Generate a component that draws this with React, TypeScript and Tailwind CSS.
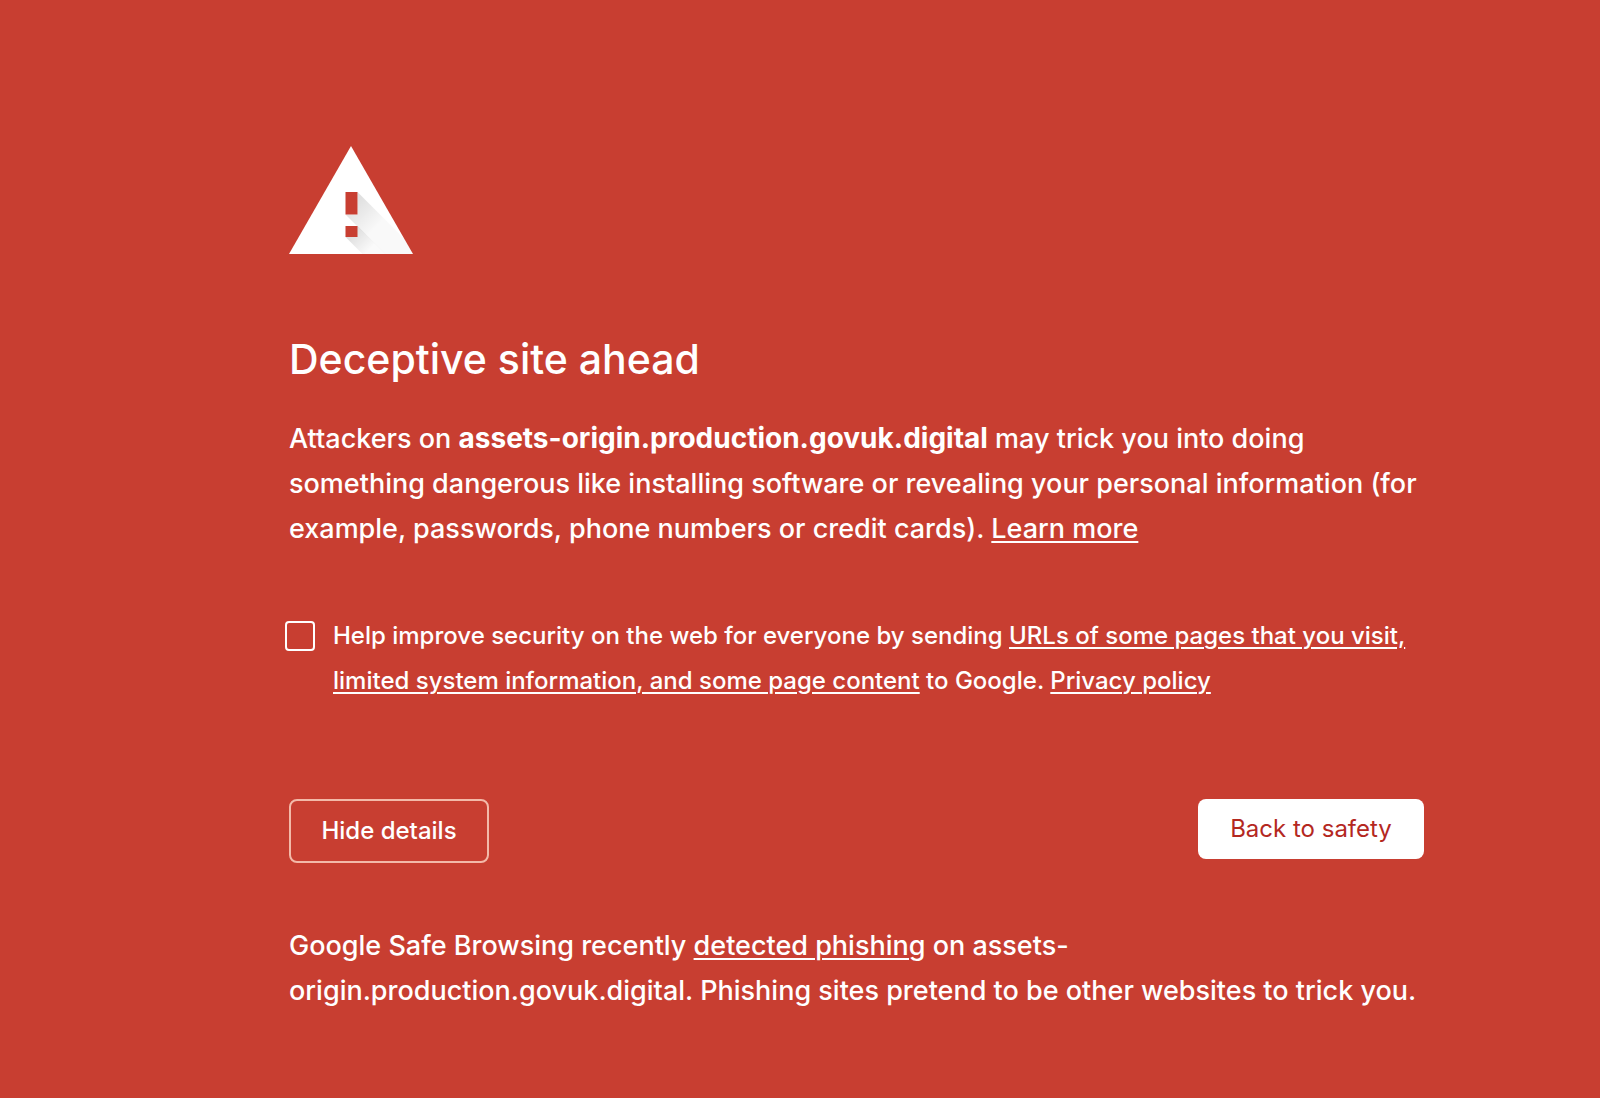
import { useState } from "react"

const linkStyle = "underline decoration-2 underline-offset-[3px]"

const WarningIcon = ()=>{
    return(
        <svg viewBox="0 0 124 108" className="w-[124px] h-[108px]" role="img" aria-label="Warning">
            <defs>
                <clipPath id="triangle">
                    <path d="M62 0 124 108H0z"/>
                </clipPath>
                <linearGradient id="shade" gradientUnits="userSpaceOnUse" x1="62" y1="62" x2="84" y2="84">
                    <stop offset="0" stopColor="#000" stopOpacity="0.12"/>
                    <stop offset="1" stopColor="#000" stopOpacity="0.025"/>
                </linearGradient>
                <linearGradient id="dotShade" gradientUnits="userSpaceOnUse" x1="62" y1="86" x2="80" y2="104">
                    <stop offset="0" stopColor="#000" stopOpacity="0.14"/>
                    <stop offset="1" stopColor="#000" stopOpacity="0.02"/>
                </linearGradient>
            </defs>
            <path d="M62 0 124 108H0z" fill="#fff"/>
            <g clipPath="url(#triangle)">
                <path d="M68.500 46 124 101.500V108H96L56.500 68.500H68.500z" fill="url(#shade)"/>
                <path d="M68.500 80 96.500 108H73.500L56.500 91z" fill="url(#dotShade)"/>
            </g>
            <path d="M56.500 46h12v22.500h-12zM56.500 80h12v11h-12z" fill="#c83e31"/>
        </svg>
    )
}

export default function App(){

    const [sendReports,setSendReports] = useState(false)
    const [showDetails,setShowDetails] = useState(true)

    return(
        <div className="min-h-screen bg-[#c83e31] text-white font-['Inter',sans-serif] font-medium">
            <main className="pl-[289px] pr-44 pt-[146px] pb-16">
                <WarningIcon/>
                <h1 className="mt-20 text-[41px] leading-[50px]">Deceptive site ahead</h1>
                <p className="mt-8 text-[27px] leading-[45px]">
                    Attackers on <strong className="text-[28px]">assets-origin.production.govuk.digital</strong> may trick you into doing
                    something dangerous like installing software or revealing your personal information (for
                    example, passwords, phone numbers or credit cards). <a href="#learn" className={linkStyle}>Learn more</a>
                </p>
                <div className="mt-[62px] -ml-1 flex gap-[18px]">
                    <input
                        id="reports"
                        type="checkbox"
                        checked={sendReports}
                        onChange={(e) => setSendReports(e.target.checked)}
                        className="mt-2 size-[30px] shrink-0 appearance-none rounded-sm border-2 border-white checked:bg-white"
                    />
                    <label htmlFor="reports" className="text-[24px] leading-[45px]">
                        Help improve security on the web for everyone by sending <a href="#data" className={linkStyle}>URLs of some pages that you visit, limited system information, and some page content</a> to Google. <a href="#privacy" className={linkStyle}>Privacy policy</a>
                    </label>
                </div>
                <div className="mt-24 flex items-start justify-between text-[24px]">
                    <button onClick={()=>setShowDetails(!showDetails)} className="h-16 w-[200px] rounded-lg border-2 border-[#f3b9a9]">
                        {showDetails ? "Hide details" : "Details"}
                    </button>
                    <button className="h-[60px] w-[226px] rounded-lg bg-white font-normal text-[#b4281f]">Back to safety</button>
                </div>
                {showDetails && (
                    <p className="mt-[60px] text-[27px] leading-[45px]">
                        Google Safe Browsing recently <a href="#phishing" className={linkStyle}>detected phishing</a> on assets-origin.production.govuk.digital. Phishing sites pretend to be other websites to trick you.
                    </p>
                )}
            </main>
        </div>
    )
}
